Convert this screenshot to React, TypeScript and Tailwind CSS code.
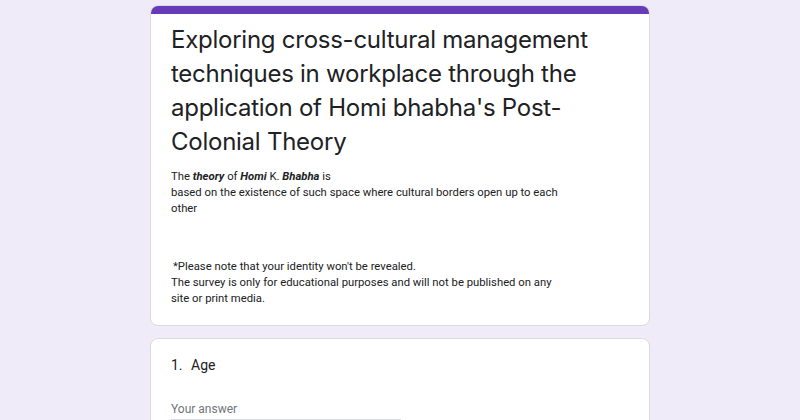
export default function App() {
  return (
    <div className="min-h-screen bg-[#f0ebf8] pt-[5px] font-['Roboto',sans-serif] text-[#202124]">
      <div className="mx-auto w-[500px]">
        <div className="rounded-lg bg-white border border-[#dadce0] overflow-hidden">
          <div className="h-[8px] bg-[#673ab7]" />
          <div className="px-5 pt-[9px] pb-[18px]">
            <h1 className="font-['Inter',sans-serif] text-[24px] leading-[34px] tracking-[-0.25px] text-[#202124]">
              Exploring cross-cultural management techniques in workplace through the application of Homi bhabha's Post-Colonial Theory
            </h1>
            <div className="mt-[10px] text-[11.3px] leading-[16px] w-[400px]">
              <p>
                The <b><i>theory</i></b> of <b><i>Homi</i></b> K. <b><i>Bhabha</i></b> is
              </p>
              <p>based on the existence of such space where cultural borders open up to each other</p>
              <p className="mt-[42px] pl-[2px]">*Please note that your identity won't be revealed.</p>
              <p>The survey is only for educational purposes and will not be published on any site or print media.</p>
            </div>
          </div>
        </div>
        <div className="mt-[12px] rounded-lg bg-white border border-[#dadce0] px-5 pt-[16px] pb-6">
          <div className="flex text-[14px] leading-[20px]">
            <span className="w-[20px]">1.</span>
            <span>Age</span>
          </div>
          <div className="mt-[26px] w-[230px] border-b border-[#dadce0] pb-[2px] text-[12px] leading-[16px] text-[#70757a]">
            Your answer
          </div>
        </div>
      </div>
    </div>
  );
}
